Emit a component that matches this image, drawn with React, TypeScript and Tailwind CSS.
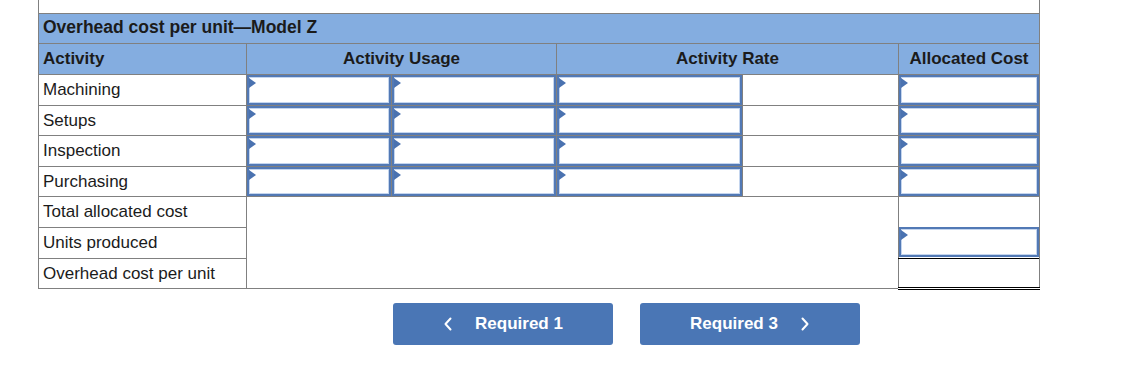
import React from 'react';

/** --- DATA --- **/
// row heights alternate so the grid lands on the reference's lines
const activities = [
  { name: 'Machining', tall: true },
  { name: 'Setups', tall: false },
  { name: 'Inspection', tall: true },
  { name: 'Purchasing', tall: false },
];

/** --- SUB-COMPONENT: INPUT CELL --- **/
const EntryBox = ({ tall }: { tall: boolean }) => (
  <div className={`relative ${tall ? 'h-[30px]' : 'h-[29px]'} border-2 border-[#5279b5] bg-white shadow-[inset_0_0_0_1px_#c4d5ee]`}>
    <span className="absolute left-0 top-[1px] w-0 h-0 border-y-[5px] border-y-transparent border-l-[7px] border-l-[#4a72b0]" />
  </div>
);

const Chevron = ({ dir }: { dir: 'left' | 'right' }) => (
  <svg width="10" height="16" viewBox="0 0 10 16" fill="none" stroke="white" strokeWidth="2" strokeLinecap="round" strokeLinejoin="round">
    {dir === 'left' ? <path d="M7.5 2.5 L2.5 8 L7.5 13.5" /> : <path d="M2.5 2.5 L7.5 8 L2.5 13.5" />}
  </svg>
);

/** --- MAIN --- **/
export default function App() {
  return (
    <div className="w-[1142px] h-[378px] bg-white text-[#1b1b1b] font-['Liberation_Sans',Arial,sans-serif] text-[17px]">
      <div className="pl-[38px]">
        <table className="table-fixed border-collapse w-[1001px]">
          <colgroup>
            <col className="w-[208px]" />
            <col className="w-[145px]" />
            <col className="w-[165px]" />
            <col className="w-[186px]" />
            <col className="w-[156px]" />
            <col className="w-[141px]" />
          </colgroup>
          <tbody>
            {/* cut-off row above */}
            <tr className="h-[13px]">
              <td colSpan={6} className="border-x border-[#808080] p-0" />
            </tr>
            <tr className="h-[30px] bg-[#84ade0]">
              <td colSpan={6} className="border border-[#808080] px-1 font-bold leading-none text-[17.5px]">
                Overhead cost per unit—Model Z
              </td>
            </tr>
            <tr className="h-[31px] bg-[#84ade0] font-bold">
              <td className="border border-[#808080] px-1 leading-none">Activity</td>
              <td colSpan={2} className="border border-[#808080] text-center leading-none">Activity Usage</td>
              <td colSpan={2} className="border border-[#808080] text-center leading-none">Activity Rate</td>
              <td className="border border-[#808080] text-center leading-none">Allocated Cost</td>
            </tr>
            {activities.map((a) => (
              <tr key={a.name} className={a.tall ? 'h-[31px]' : 'h-[30px]'}>
                <td className="border border-[#808080] px-1 leading-none">{a.name}</td>
                <td className="border border-[#808080] p-0"><EntryBox tall={a.tall} /></td>
                <td className="border border-[#808080] p-0"><EntryBox tall={a.tall} /></td>
                <td className="border border-[#808080] p-0"><EntryBox tall={a.tall} /></td>
                <td className="border border-[#808080] p-0" />
                <td className="border border-[#808080] p-0"><EntryBox tall={a.tall} /></td>
              </tr>
            ))}
            <tr className="h-[31px]">
              <td className="border border-[#808080] px-1 leading-none">Total allocated cost</td>
              <td rowSpan={3} colSpan={4} className="border border-[#808080] p-0" />
              <td className="border-x border-[#808080] border-t border-t-black p-0" />
            </tr>
            <tr className="h-[31px]">
              <td className="border border-[#808080] px-1 leading-none">Units produced</td>
              <td className="border-x border-[#808080] p-0"><EntryBox tall /></td>
            </tr>
            <tr className="h-[30px]">
              <td className="border border-[#808080] px-1 leading-none">Overhead cost per unit</td>
              <td className="border-x border-[#808080] border-t border-t-black border-b-[3px] border-b-black border-double p-0" />
            </tr>
          </tbody>
        </table>
      </div>

      <div className="flex gap-[27px] pl-[393px] pt-[13px]">
        <button className="w-[220px] h-[42px] rounded-[3px] bg-[#4a76b5] text-white font-bold flex items-center justify-center gap-[22px]">
          <Chevron dir="left" />
          <span>Required 1</span>
        </button>
        <button className="w-[220px] h-[42px] rounded-[3px] bg-[#4a76b5] text-white font-bold flex items-center justify-center gap-[22px]">
          <span>Required 3</span>
          <Chevron dir="right" />
        </button>
      </div>
    </div>
  );
}
